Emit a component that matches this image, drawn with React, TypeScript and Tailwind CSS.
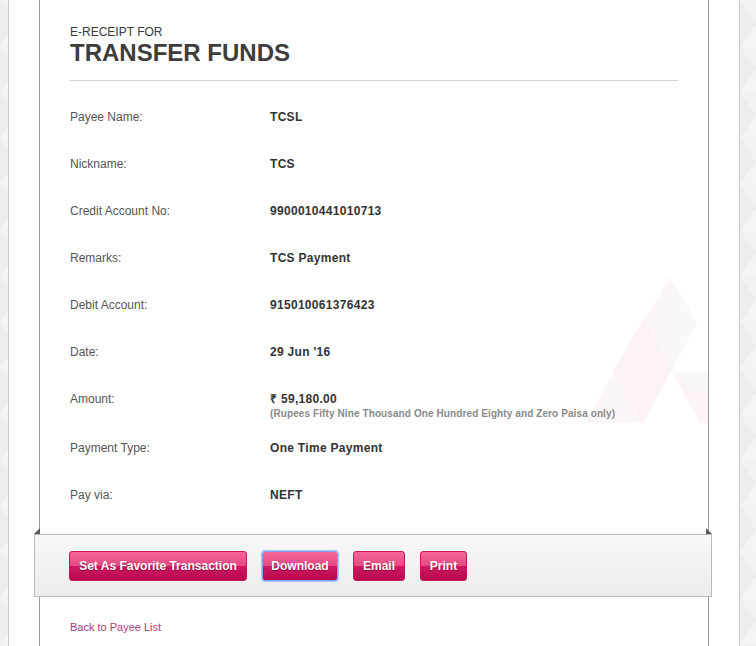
import React from "react";

type Row = { label: string; value: string; note?: string };

const rows: Row[] = [
  { label: "Payee Name:", value: "TCSL" },
  { label: "Nickname:", value: "TCS" },
  { label: "Credit Account No:", value: "9900010441010713" },
  { label: "Remarks:", value: "TCS Payment" },
  { label: "Debit Account:", value: "915010061376423" },
  { label: "Date:", value: "29 Jun '16" },
  {
    label: "Amount:",
    value: "₹ 59,180.00",
    note: "(Rupees Fifty Nine Thousand One Hundred Eighty and Zero Paisa only)",
  },
  { label: "Payment Type:", value: "One Time Payment" },
  { label: "Pay via:", value: "NEFT" },
];

function SidePattern({ id }: { id: string }) {
  return (
    <div className="h-full w-full overflow-hidden bg-[#f4f4f4]">
      <svg width="100%" height="100%">
        <defs>
          <pattern id={id} width="32" height="46" patternUnits="userSpaceOnUse">
            <polygon points="0,0 16,23 0,46" fill="#ededed" />
            <polygon points="16,23 32,0 32,46" fill="#f8f8f8" />
            <polygon points="0,0 32,0 16,23" fill="#f2f2f2" />
          </pattern>
        </defs>
        <rect width="100%" height="100%" fill={`url(#${id})`} />
      </svg>
    </div>
  );
}

function Watermark() {
  return (
    <svg
      className="pointer-events-none absolute left-[545px] top-[277px]"
      width="123"
      height="146"
      viewBox="0 0 123 146"
    >
      <polygon points="85,0 112,46 58,146 0,146" fill="#fdf6f8" />
      <polygon points="85,0 112,46 85,96" fill="#f9f8f8" />
      <polygon points="60,40 85,96 58,146 28,94" fill="#fbf3f5" />
      <polygon points="88,96 123,96 123,146 115,146" fill="#fcf4f6" />
      <polygon points="88,96 123,96 123,120" fill="#f8f6f7" />
    </svg>
  );
}

function PinkButton({ label, width, focused }: { label: string; width: string; focused?: boolean }) {
  return (
    <button
      className={`${width} h-[30px] rounded-[3px] bg-[linear-gradient(to_bottom,#f4659a_0%,#e44a82_50%,#cf1862_50%,#b9094f_100%)] text-[12px] font-bold leading-none text-white [text-shadow:0_1px_1px_rgba(90,0,30,0.55)] ${
        focused ? "border border-[#7ea2ec] shadow-[0_0_0_1px_#a9c2f2]" : "border border-[#c3185a]"
      }`}
    >
      {label}
    </button>
  );
}

export default function App() {
  return (
    <div className="flex h-[646px] w-[756px] overflow-hidden bg-white font-['Liberation_Sans',Arial,sans-serif]">
      <div className="w-[8px] shrink-0">
        <SidePattern id="pat-left" />
      </div>
      <div className="w-[31px] shrink-0 border-l border-[#cdcdcd] bg-white" />

      <main className="relative w-[670px] shrink-0 border-x border-[#9b9b9b] bg-white">
        <Watermark />

        <div className="relative px-[30px]">
          <div className="pt-[25px] text-[12px] leading-[14px] text-[#3a3a3a]">E-RECEIPT FOR</div>
          <h1 className="text-[24px] font-bold leading-[28px] text-[#3d3d3d]">TRANSFER FUNDS</h1>
          <div className="mt-[13px] h-px bg-[#d3d3d3]" />

          <dl className="pt-[13px]">
            {rows.map((r) => (
              <div key={r.label} className={`flex pt-[15px] ${r.note ? "h-[49px]" : "h-[47px]"}`}>
                <dt className="w-[200px] text-[12px] leading-[16px] text-[#555]">{r.label}</dt>
                <dd>
                  <div className="text-[12px] font-bold leading-[16px] tracking-[0.3px] text-[#333]">{r.value}</div>
                  {r.note && (
                    <div className="text-[10px] font-bold leading-[13px] tracking-[0.1px] text-[#8a8a8a]">{r.note}</div>
                  )}
                </dd>
              </div>
            ))}
          </dl>
        </div>

        <div className="relative z-10 -ml-[6px] -mr-[4px] mt-[15px]">
          <svg className="absolute -top-[6px] left-0" width="6" height="6" viewBox="0 0 6 6">
            <polygon points="0,6 6,0 6,6" fill="#5a5a5a" />
          </svg>
          <svg className="absolute -top-[6px] right-0" width="6" height="6" viewBox="0 0 6 6">
            <polygon points="0,0 6,6 0,6" fill="#5a5a5a" />
          </svg>
          <div className="flex h-[63px] items-center gap-[15px] border border-[#b9b9b9] bg-[linear-gradient(to_bottom,#f8f8f8,#ececec)] pl-[34px]">
            <PinkButton label="Set As Favorite Transaction" width="w-[178px]" />
            <PinkButton label="Download" width="w-[76px]" focused />
            <PinkButton label="Email" width="w-[52px]" />
            <PinkButton label="Print" width="w-[47px]" />
          </div>
        </div>

        <div className="px-[30px] pt-[17px]">
          <a href="#" className="text-[11px] leading-[14px] text-[#b2367c]">
            Back to Payee List
          </a>
        </div>
      </main>

      <div className="w-[31px] shrink-0 border-r border-[#cdcdcd] bg-white" />
      <div className="w-[16px] shrink-0">
        <SidePattern id="pat-right" />
      </div>
    </div>
  );
}
